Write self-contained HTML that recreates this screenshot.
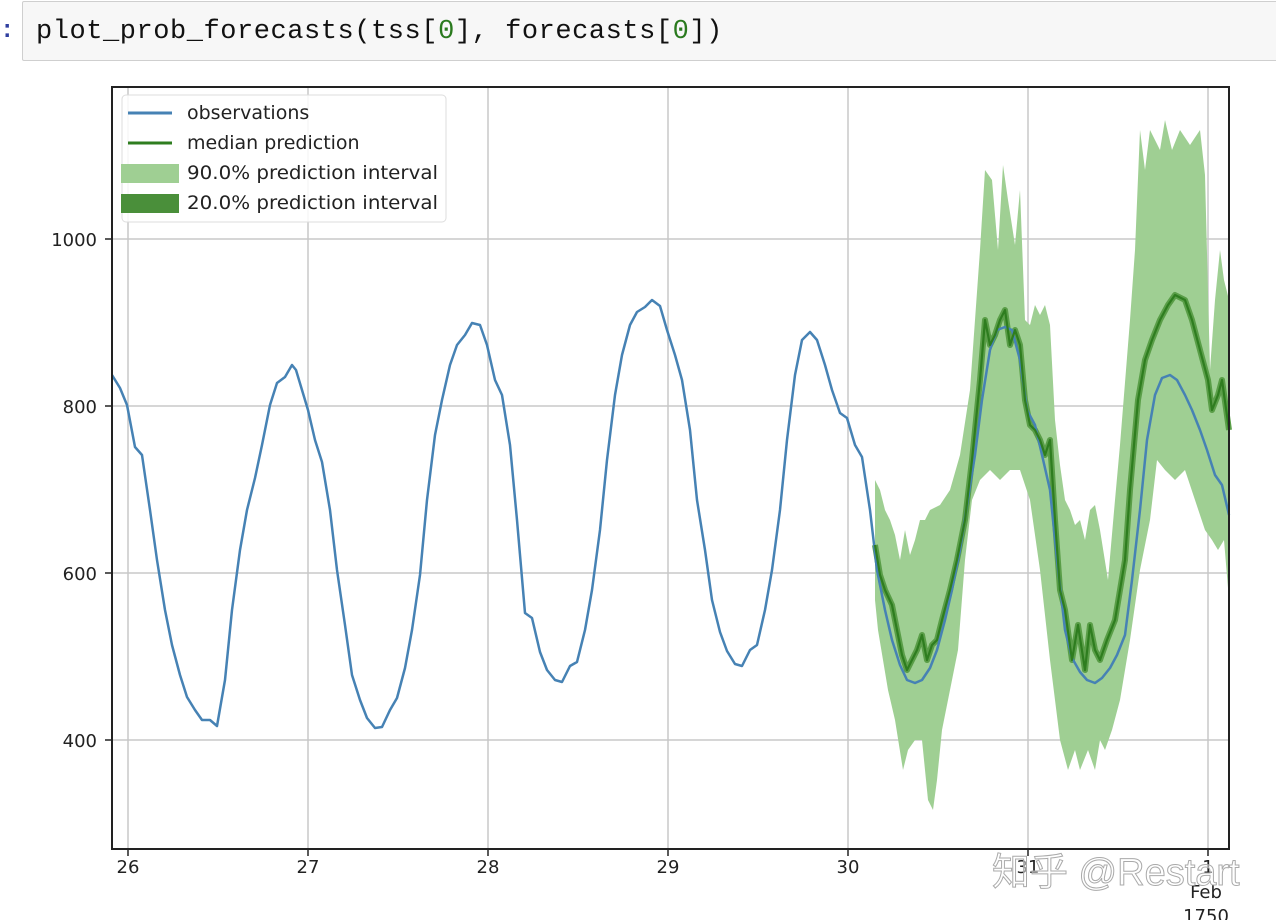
<!DOCTYPE html>
<html><head><meta charset="utf-8"><style>
body{margin:0;background:#fff;width:1276px;height:920px;overflow:hidden;position:relative;font-family:"Liberation Sans",sans-serif}
.cell{position:absolute;left:22px;top:1px;width:1270px;height:58px;background:#f7f7f7;border:1px solid #cfcfcf;border-radius:2px}
.code{position:absolute;left:36px;top:16px;font:27px/32px "Liberation Mono",monospace;letter-spacing:0.55px;color:#111;white-space:pre}
.g{color:#2a7a1e}
.pr{position:absolute;left:0;top:16px;font:bold 24px/32px "Liberation Mono",monospace;color:#303f9f}
</style></head><body>
<div class="pr">:</div>
<div class="cell"></div>
<div class="code">plot_prob_forecasts(tss[<span class="g">0</span>], forecasts[<span class="g">0</span>])</div>
<svg width="1276" height="920" style="position:absolute;left:0;top:0" font-family="DejaVu Sans, Liberation Sans, sans-serif">
<g stroke="#c8c8c8" stroke-width="1.5">
<line x1="128" y1="87" x2="128" y2="849"/><line x1="308" y1="87" x2="308" y2="849"/><line x1="488" y1="87" x2="488" y2="849"/><line x1="668" y1="87" x2="668" y2="849"/><line x1="848" y1="87" x2="848" y2="849"/><line x1="1028" y1="87" x2="1028" y2="849"/><line x1="1208" y1="87" x2="1208" y2="849"/>
<line x1="112" y1="239" x2="1229" y2="239"/><line x1="112" y1="406" x2="1229" y2="406"/><line x1="112" y1="573" x2="1229" y2="573"/><line x1="112" y1="740" x2="1229" y2="740"/>
</g>
<polygon fill="#9fcf93" points="875,480 880,490 885,510 890,520 895,535 900,560 905,530 910,555 915,540 920,520 925,520 930,510 940,505 950,490 960,455 970,390 980,250 985,170 992,180 998,250 1003,165 1008,200 1015,245 1020,190 1025,320 1030,325 1035,305 1040,315 1045,305 1050,325 1055,420 1060,465 1065,500 1070,510 1075,525 1080,520 1085,540 1090,510 1095,505 1100,530 1108,580 1115,500 1120,445 1130,320 1135,250 1140,130 1145,170 1150,130 1160,150 1165,120 1172,150 1180,130 1190,145 1200,130 1205,175 1210,370 1215,300 1220,250 1224,280 1229,300 1229,600 1224,540 1218,550 1212,540 1205,530 1195,500 1185,470 1175,480 1165,470 1157,460 1150,520 1140,570 1130,640 1120,700 1112,730 1105,750 1100,740 1095,770 1088,750 1080,770 1075,750 1068,770 1060,740 1050,660 1040,570 1030,500 1020,470 1010,470 1000,480 990,470 980,480 972,500 965,560 958,650 950,690 942,730 937,780 933,810 928,800 922,740 915,740 908,750 903,770 895,720 888,690 883,660 878,630 875,600"/>
<polyline fill="none" stroke="#5a9e48" stroke-width="6" stroke-linejoin="round" points="875,545 880,575 885,590 892,605 897,630 902,655 907,670 912,660 917,650 922,635 927,660 932,645 937,640 942,620 950,590 957,560 965,520 972,460 980,380 985,320 990,345 995,335 1000,320 1005,310 1010,345 1015,330 1020,345 1025,400 1030,425 1035,430 1040,440 1045,455 1050,440 1055,520 1060,590 1065,610 1072,660 1078,625 1085,670 1090,625 1095,650 1100,660 1107,640 1115,620 1125,560 1130,490 1138,400 1145,360 1152,340 1160,320 1168,305 1175,295 1185,300 1192,320 1200,350 1208,380 1212,410 1218,395 1222,380 1229,430"/>
<polyline fill="none" stroke="#4682b4" stroke-width="2.5" stroke-linejoin="round" points="112,375 120,388 127,405 135,447 142,455 150,510 157,560 165,610 172,645 180,675 187,697 195,710 202,720 210,720 217,726 225,680 232,610 240,550 247,510 255,478 262,445 270,405 277,383 285,377 292,365 296,370 302,390 308,410 315,440 322,462 330,510 337,570 345,625 352,675 360,700 367,718 375,728 382,727 390,710 397,698 405,668 412,630 420,575 427,500 435,435 442,400 450,365 457,345 465,335 472,323 480,325 487,345 495,380 502,395 510,445 517,520 525,613 532,618 540,652 547,670 555,680 562,682 570,666 577,662 585,630 592,590 600,530 607,460 615,395 622,355 630,325 637,312 645,307 652,300 660,306 667,330 675,355 682,380 690,430 697,500 705,550 712,600 720,632 727,651 735,664 742,666 750,650 757,645 765,610 772,570 780,510 787,440 795,375 802,340 810,332 817,340 825,365 832,390 840,413 847,418 855,445 862,457 870,510 877,570 885,610 892,640 900,665 907,680 915,683 922,680 930,668 937,650 945,620 952,590 960,550 967,505 975,455 982,400 990,350 997,330 1005,327 1012,330 1020,360 1027,410 1035,425 1042,455 1050,490 1057,560 1065,630 1072,658 1080,672 1087,680 1095,683 1102,678 1110,668 1117,655 1125,635 1132,580 1140,510 1147,440 1155,395 1162,378 1170,375 1177,380 1185,395 1192,410 1200,430 1207,450 1215,475 1222,485 1229,515"/>
<polyline fill="none" stroke="#2e7d1f" stroke-width="2.2" stroke-linejoin="round" points="875,545 880,575 885,590 892,605 897,630 902,655 907,670 912,660 917,650 922,635 927,660 932,645 937,640 942,620 950,590 957,560 965,520 972,460 980,380 985,320 990,345 995,335 1000,320 1005,310 1010,345 1015,330 1020,345 1025,400 1030,425 1035,430 1040,440 1045,455 1050,440 1055,520 1060,590 1065,610 1072,660 1078,625 1085,670 1090,625 1095,650 1100,660 1107,640 1115,620 1125,560 1130,490 1138,400 1145,360 1152,340 1160,320 1168,305 1175,295 1185,300 1192,320 1200,350 1208,380 1212,410 1218,395 1222,380 1229,430"/>
<rect x="112" y="87" width="1117" height="762" fill="none" stroke="#222" stroke-width="2"/>
<g stroke="#222" stroke-width="1.5">
<line x1="105" y1="239" x2="112" y2="239"/><line x1="105" y1="406" x2="112" y2="406"/><line x1="105" y1="573" x2="112" y2="573"/><line x1="105" y1="740" x2="112" y2="740"/>
<line x1="128" y1="849" x2="128" y2="856"/><line x1="308" y1="849" x2="308" y2="856"/><line x1="488" y1="849" x2="488" y2="856"/><line x1="668" y1="849" x2="668" y2="856"/><line x1="848" y1="849" x2="848" y2="856"/><line x1="1028" y1="849" x2="1028" y2="856"/><line x1="1208" y1="849" x2="1208" y2="856"/>
</g>
<g font-size="18" fill="#222" text-anchor="end">
<text x="97" y="246">1000</text><text x="97" y="413">800</text><text x="97" y="580">600</text><text x="97" y="747">400</text>
</g>
<g font-size="18" fill="#222" text-anchor="middle">
<text x="128" y="873">26</text><text x="308" y="873">27</text><text x="488" y="873">28</text><text x="668" y="873">29</text><text x="848" y="873">30</text><text x="1028" y="873">31</text><text x="1208" y="873">1</text><text x="1206" y="898">Feb</text><text x="1206" y="922">1750</text>
</g>
<rect x="122" y="95" width="324" height="127" rx="4" fill="#fff" fill-opacity="0.85" stroke="#ddd"/>
<line x1="128" y1="113" x2="172" y2="113" stroke="#4682b4" stroke-width="3"/>
<line x1="128" y1="143" x2="172" y2="143" stroke="#2e7d1f" stroke-width="3"/>
<rect x="121" y="164" width="58" height="19" fill="#9fcf93"/>
<rect x="121" y="194" width="58" height="19" fill="#4a8f3a"/>
<g font-size="19" fill="#222">
<text x="187" y="119">observations</text><text x="187" y="149">median prediction</text><text x="187" y="179" textLength="251" lengthAdjust="spacingAndGlyphs">90.0% prediction interval</text><text x="187" y="209" textLength="251" lengthAdjust="spacingAndGlyphs">20.0% prediction interval</text>
</g>
<text x="992" y="885" font-size="38" fill="#fff" fill-opacity="0.5" stroke="#aaa" stroke-width="1" font-family="Liberation Sans, Noto Sans CJK SC, sans-serif">知乎 @Restart</text>
</svg>
</body></html>
